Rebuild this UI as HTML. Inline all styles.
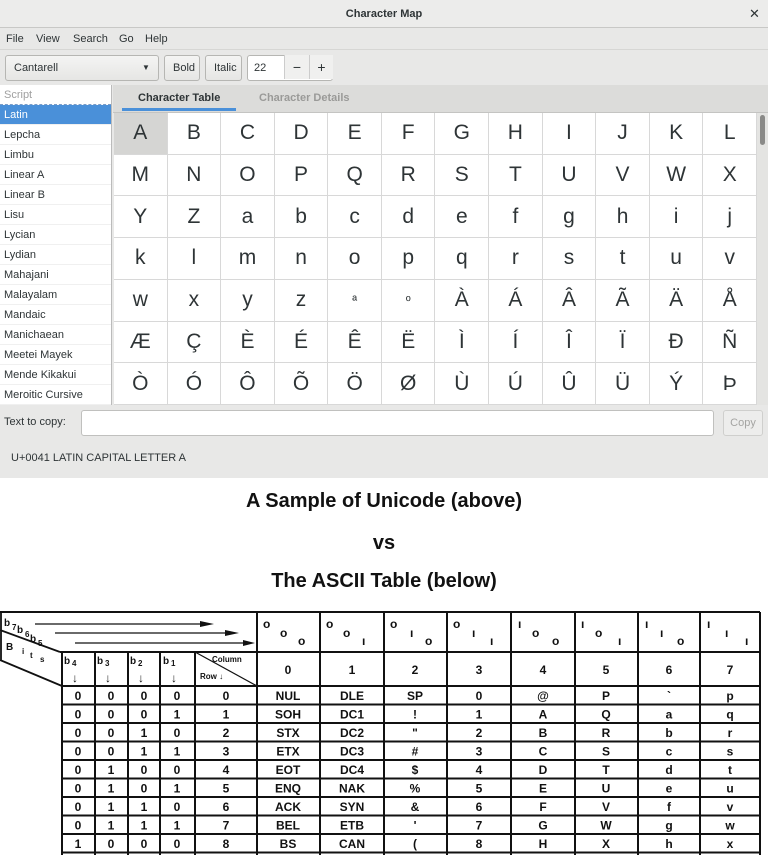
<!DOCTYPE html>
<html><head><meta charset="utf-8"><style>
*{box-sizing:border-box;margin:0;padding:0}
body{width:768px;height:855px;background:#fff;position:relative;overflow:hidden;font-family:"Liberation Sans","DejaVu Sans",sans-serif;font-size:11px;color:#2e3436}
.a{position:absolute}
#win{left:0;top:0;width:768px;height:478px;background:#e8e8e7}
.btn{position:absolute;border:1px solid #b6b6b3;border-radius:3px;background:linear-gradient(#f4f4f3,#e6e6e4);height:26px;top:55px;line-height:24px;font-size:11px;padding-left:8px}
.grid{position:absolute;left:114px;top:113px;width:643px;height:292px;display:grid;grid-template-columns:repeat(12,1fr);grid-template-rows:repeat(7,1fr);background:#fff}
.grid div{border-right:1px solid #d8d8d8;border-bottom:1px solid #d8d8d8;display:flex;align-items:center;justify-content:center;font-size:21px;color:#2e3436;font-family:"Liberation Sans","DejaVu Sans",sans-serif;font-weight:normal}
.side div{height:20px;line-height:20px;padding-left:4px;font-size:11px;border-bottom:1px solid #f0f0f0}
h2{position:absolute;left:0;width:768px;text-align:center;font-size:20px;font-weight:bold;color:#111}
</style></head><body>
<div id="win" class="a"></div>
<div class="a" style="left:0;top:0;width:768px;height:28px;border-bottom:1px solid #c8c8c6;background:#ececeb;text-align:center;line-height:28px;font-size:11px;font-weight:bold;color:#2e3436">Character Map</div>
<div class="a" style="left:749px;top:6px;font-size:13px;font-weight:bold">✕</div>
<div class="a" style="left:0;top:28px;height:22px;width:768px;line-height:22px;font-size:11px;border-bottom:1px solid #d6d6d4">
<span class="a" style="left:6px">File</span><span class="a" style="left:36px">View</span><span class="a" style="left:73px">Search</span><span class="a" style="left:119px">Go</span><span class="a" style="left:145px">Help</span></div>
<div class="btn" style="left:5px;width:154px">Cantarell<span class="a" style="left:136px;font-size:8px">▼</span></div>
<div class="btn" style="left:164px;width:36px">Bold</div>
<div class="btn" style="left:205px;width:37px">Italic</div>
<div class="btn" style="left:247px;width:86px;background:#fff;padding-left:6px">22<span class="a" style="left:36px;top:-1px;width:25px;height:24px;border-left:1px solid #ccc;background:#f0f0ef;text-align:center;font-size:14px">−</span><span class="a" style="left:61px;top:-1px;width:24px;height:24px;border-left:1px solid #ccc;background:#f0f0ef;text-align:center;font-size:14px">+</span></div>
<div class="a side" style="left:0;top:85px;width:112px;height:320px;background:#fff;border-right:1px solid #bbb;overflow:hidden">
<div style="color:#a0a0a0;border-bottom:1px dashed #7a9cc6">Script</div>
<div style="background:#4a90d9;color:#fff">Latin</div>
<div>Lepcha</div><div>Limbu</div><div>Linear A</div><div>Linear B</div><div>Lisu</div><div>Lycian</div><div>Lydian</div><div>Mahajani</div><div>Malayalam</div><div>Mandaic</div><div>Manichaean</div><div>Meetei Mayek</div><div>Mende Kikakui</div><div>Meroitic Cursive</div>
</div>
<div class="a" style="left:113px;top:85px;width:655px;height:28px;background:#dcdcda;border-bottom:1px solid #c4c4c2"></div>
<div class="a" style="left:138px;top:92px;font-weight:bold;font-size:11px">Character Table</div>
<div class="a" style="left:122px;top:108px;width:114px;height:3px;background:#4a90d9"></div>
<div class="a" style="left:259px;top:92px;font-weight:bold;font-size:11px;color:#9a9a98">Character Details</div>
<div class="grid">
<div style="background:#d5d5d3">A</div><div>B</div><div>C</div><div>D</div><div>E</div><div>F</div><div>G</div><div>H</div><div>I</div><div>J</div><div>K</div><div>L</div>
<div>M</div><div>N</div><div>O</div><div>P</div><div>Q</div><div>R</div><div>S</div><div>T</div><div>U</div><div>V</div><div>W</div><div>X</div>
<div>Y</div><div>Z</div><div>a</div><div>b</div><div>c</div><div>d</div><div>e</div><div>f</div><div>g</div><div>h</div><div>i</div><div>j</div>
<div>k</div><div>l</div><div>m</div><div>n</div><div>o</div><div>p</div><div>q</div><div>r</div><div>s</div><div>t</div><div>u</div><div>v</div>
<div>w</div><div>x</div><div>y</div><div>z</div><div style="font-size:13px">ª</div><div style="font-size:13px">º</div><div>À</div><div>Á</div><div>Â</div><div>Ã</div><div>Ä</div><div>Å</div>
<div>Æ</div><div>Ç</div><div>È</div><div>É</div><div>Ê</div><div>Ë</div><div>Ì</div><div>Í</div><div>Î</div><div>Ï</div><div>Đ</div><div>Ñ</div>
<div>Ò</div><div>Ó</div><div>Ô</div><div>Õ</div><div>Ö</div><div>Ø</div><div>Ù</div><div>Ú</div><div>Û</div><div>Ü</div><div>Ý</div><div>Þ</div>
</div>
<div class="a" style="left:757px;top:113px;width:11px;height:292px;background:#e4e4e2"><div class="a" style="left:3px;top:2px;width:5px;height:30px;border-radius:3px;background:#8a8a88"></div></div>
<div class="a" style="left:4px;top:416px;font-size:11px">Text to copy:</div>
<div class="a" style="left:81px;top:410px;width:633px;height:26px;background:#fff;border:1px solid #c0c0be;border-radius:3px"></div>
<div class="a" style="left:723px;top:410px;width:40px;height:26px;border:1px solid #cfcfcd;border-radius:3px;background:#ededec;color:#a4a4a2;text-align:center;line-height:24px">Copy</div>
<div class="a" style="left:11px;top:452px;font-size:11px">U+0041 LATIN CAPITAL LETTER A</div>
<h2 style="top:490px">A Sample of Unicode (above)</h2>
<h2 style="top:532px">vs</h2>
<h2 style="top:570px">The ASCII Table (below)</h2>
<svg class="a" style="left:0;top:0" width="768" height="855" font-family="Liberation Sans,sans-serif" font-weight="bold" fill="#111">
<g stroke="#111" stroke-width="2" fill="none">
<path d="M0 612H760M60 652H760M62 686H760M62 704.5H760M62 723H760M62 741.5H760M62 760H760M62 778.5H760M62 797H760M62 815.5H760M62 834H760M62 852.5H760"/>
<path d="M257 612V855M320 612V855M384 612V855M447 612V855M511 612V855M575 612V855M638 612V855M700 612V855M760 612V855M62 652V855M95 652V855M128 652V855M160 652V855M195 652V855"/>
<path d="M1 612V660M0 630L60 652M0 660L62 686" stroke-width="1.8"/>
<path d="M195 652L257 686" stroke-width="1.2"/>
<path d="M35 624H205M55 633H230M75 643H248" stroke-width="1.2"/>
<path d="M200 621l14 3-14 3zM225 630l14 3-14 3zM243 640l12 3-12 3z" fill="#111" stroke="none"/>
</g>
<g font-size="10"><text x="4" y="626">b</text><text x="12" y="630" font-size="8">7</text><text x="17" y="633">b</text><text x="25" y="637" font-size="8">6</text><text x="30" y="642">b</text><text x="38" y="646" font-size="8">5</text>
<text x="6" y="650">B</text><text x="22" y="654" font-size="8">i</text><text x="30" y="658" font-size="8">t</text><text x="40" y="662" font-size="8">s</text>
<text x="64" y="664">b</text><text x="72" y="666" font-size="8">4</text><text x="97" y="664">b</text><text x="105" y="666" font-size="8">3</text><text x="130" y="664">b</text><text x="138" y="666" font-size="8">2</text><text x="163" y="664">b</text><text x="171" y="666" font-size="8">1</text>
<text x="72" y="682" font-size="12">↓</text><text x="105" y="682" font-size="12">↓</text><text x="138" y="682" font-size="12">↓</text><text x="171" y="682" font-size="12">↓</text>
<text x="212" y="662" font-size="8">Column</text><text x="200" y="679" font-size="8">Row ↓</text></g>
<g font-size="12">
<text x="263" y="628">o</text><text x="280" y="637">o</text><text x="298" y="645">o</text>
<text x="326" y="628">o</text><text x="343" y="637">o</text><text x="362" y="645">ı</text>
<text x="390" y="628">o</text><text x="410" y="637">ı</text><text x="425" y="645">o</text>
<text x="453" y="628">o</text><text x="472" y="637">ı</text><text x="490" y="645">ı</text>
<text x="518" y="628">ı</text><text x="532" y="637">o</text><text x="552" y="645">o</text>
<text x="581" y="628">ı</text><text x="595" y="637">o</text><text x="618" y="645">ı</text>
<text x="645" y="628">ı</text><text x="660" y="637">ı</text><text x="677" y="645">o</text>
<text x="707" y="628">ı</text><text x="725" y="637">ı</text><text x="745" y="645">ı</text>
</g>
<g font-size="12" text-anchor="middle">
<text x="288" y="674">0</text><text x="352" y="674">1</text><text x="415" y="674">2</text><text x="479" y="674">3</text><text x="543" y="674">4</text><text x="606" y="674">5</text><text x="669" y="674">6</text><text x="730" y="674">7</text>
</g>
<g font-size="12" text-anchor="middle">
<g transform="translate(0,700)"><text x="78">0</text><text x="111">0</text><text x="144">0</text><text x="177">0</text><text x="226">0</text><text x="288">NUL</text><text x="352">DLE</text><text x="415">SP</text><text x="479">0</text><text x="543">@</text><text x="606">P</text><text x="669">`</text><text x="730">p</text></g>
<g transform="translate(0,718.5)"><text x="78">0</text><text x="111">0</text><text x="144">0</text><text x="177">1</text><text x="226">1</text><text x="288">SOH</text><text x="352">DC1</text><text x="415">!</text><text x="479">1</text><text x="543">A</text><text x="606">Q</text><text x="669">a</text><text x="730">q</text></g>
<g transform="translate(0,737)"><text x="78">0</text><text x="111">0</text><text x="144">1</text><text x="177">0</text><text x="226">2</text><text x="288">STX</text><text x="352">DC2</text><text x="415">"</text><text x="479">2</text><text x="543">B</text><text x="606">R</text><text x="669">b</text><text x="730">r</text></g>
<g transform="translate(0,755.5)"><text x="78">0</text><text x="111">0</text><text x="144">1</text><text x="177">1</text><text x="226">3</text><text x="288">ETX</text><text x="352">DC3</text><text x="415">#</text><text x="479">3</text><text x="543">C</text><text x="606">S</text><text x="669">c</text><text x="730">s</text></g>
<g transform="translate(0,774)"><text x="78">0</text><text x="111">1</text><text x="144">0</text><text x="177">0</text><text x="226">4</text><text x="288">EOT</text><text x="352">DC4</text><text x="415">$</text><text x="479">4</text><text x="543">D</text><text x="606">T</text><text x="669">d</text><text x="730">t</text></g>
<g transform="translate(0,792.5)"><text x="78">0</text><text x="111">1</text><text x="144">0</text><text x="177">1</text><text x="226">5</text><text x="288">ENQ</text><text x="352">NAK</text><text x="415">%</text><text x="479">5</text><text x="543">E</text><text x="606">U</text><text x="669">e</text><text x="730">u</text></g>
<g transform="translate(0,811)"><text x="78">0</text><text x="111">1</text><text x="144">1</text><text x="177">0</text><text x="226">6</text><text x="288">ACK</text><text x="352">SYN</text><text x="415">&amp;</text><text x="479">6</text><text x="543">F</text><text x="606">V</text><text x="669">f</text><text x="730">v</text></g>
<g transform="translate(0,829.5)"><text x="78">0</text><text x="111">1</text><text x="144">1</text><text x="177">1</text><text x="226">7</text><text x="288">BEL</text><text x="352">ETB</text><text x="415">'</text><text x="479">7</text><text x="543">G</text><text x="606">W</text><text x="669">g</text><text x="730">w</text></g>
<g transform="translate(0,848)"><text x="78">1</text><text x="111">0</text><text x="144">0</text><text x="177">0</text><text x="226">8</text><text x="288">BS</text><text x="352">CAN</text><text x="415">(</text><text x="479">8</text><text x="543">H</text><text x="606">X</text><text x="669">h</text><text x="730">x</text></g>
</g>
</svg>
</body></html>
